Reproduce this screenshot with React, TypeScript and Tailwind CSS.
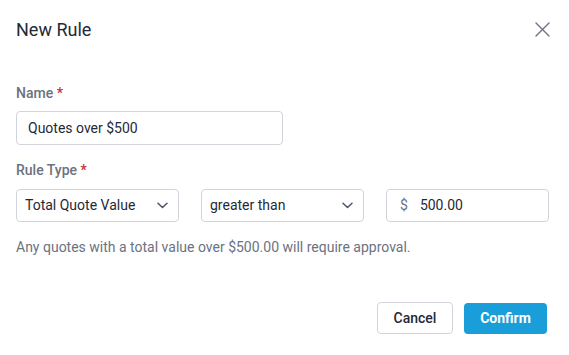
import { useState } from "react";

function Chevron() {
  return (
    <svg className="w-[11px] h-[7px] text-[#4b5563]" viewBox="0 0 11 7" fill="none" stroke="currentColor">
      <path d="M1 1.2l4.5 4.3L10 1.2" strokeWidth="1.5" strokeLinecap="round" strokeLinejoin="round" />
    </svg>
  );
}

export default function App() {
  const [name, setName] = useState("Quotes over $500");
  const [amount, setAmount] = useState("500.00");

  return (
    <div
      className="w-[569px] h-[355px] bg-white text-[#1f2937] relative"
      style={{ fontFamily: "Roboto, 'Liberation Sans', sans-serif" }}
    >
      {/* HEADER */}
      <div className="flex justify-between items-center pl-4 pr-[19px] pt-[17px] h-[42px]">
        <h2 className="text-[18px] leading-none">New Rule</h2>
        <button className="text-[#6b7280]">
          <svg className="w-[15px] h-[15px]" viewBox="0 0 15 15" fill="none" stroke="currentColor">
            <path d="M1 1l13 13M14 1L1 14" strokeWidth="1.4" strokeLinecap="round" />
          </svg>
        </button>
      </div>

      {/* BODY */}
      <div className="px-4 pt-[43px]">
        <label className="block text-[14px] font-medium text-[#6b7280] leading-4">
          Name <span className="text-[#c53030]">*</span>
        </label>
        <input
          className="mt-[10px] w-[267px] h-[34px] border border-[#d1d5db] rounded-[4px] px-[11px] text-[14px] text-[#1f2937] outline-none"
          value={name}
          onChange={(e) => setName(e.target.value)}
        />

        <label className="block mt-[17px] text-[14px] font-medium text-[#6b7280] leading-4">
          Rule Type <span className="text-[#c53030]">*</span>
        </label>
        <div className="mt-[11px] flex gap-[22px]">
          <div className="w-[163px] h-[33px] border border-[#d1d5db] rounded-[4px] flex items-center justify-between pl-[8px] pr-[10px] text-[14px]">
            <span>Total Quote Value</span>
            <Chevron />
          </div>
          <div className="w-[163px] h-[33px] border border-[#d1d5db] rounded-[4px] flex items-center justify-between pl-[8px] pr-[10px] text-[14px]">
            <span>greater than</span>
            <Chevron />
          </div>
          <div className="w-[163px] h-[33px] border border-[#d1d5db] rounded-[4px] flex items-center pl-[13px] text-[14px]">
            <span className="text-[#6b7280]">$</span>
            <input
              className="ml-[12px] w-[100px] outline-none text-[#1f2937]"
              value={amount}
              onChange={(e) => setAmount(e.target.value)}
            />
          </div>
        </div>

        <p className="mt-[15px] text-[14px] leading-5 text-[#6b7280]">
          Any quotes with a total value over $500.00 will require approval.
        </p>
      </div>

      {/* FOOTER */}
      <div className="absolute right-[22px] top-[302px] flex gap-[11px]">
        <button className="w-[76px] h-[32px] border border-[#d1d5db] rounded-[4px] text-[14px] font-medium text-[#1f2937]">
          Cancel
        </button>
        <button className="w-[83px] h-[31px] mt-px bg-[#1a9ed9] rounded-[4px] text-[14px] font-bold text-white">
          Confirm
        </button>
      </div>
    </div>
  );
}
